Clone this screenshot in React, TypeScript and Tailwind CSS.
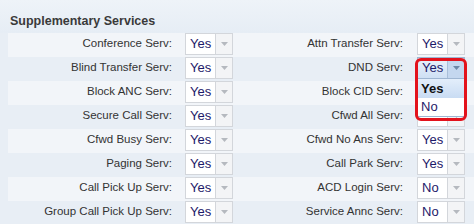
import React from 'react';

type Row = { left: string; leftVal: string; right: string; rightVal: string };

const rows: Row[] = [
  { left: 'Conference Serv:', leftVal: 'Yes', right: 'Attn Transfer Serv:', rightVal: 'Yes' },
  { left: 'Blind Transfer Serv:', leftVal: 'Yes', right: 'DND Serv:', rightVal: 'Yes' },
  { left: 'Block ANC Serv:', leftVal: 'Yes', right: 'Block CID Serv:', rightVal: '' },
  { left: 'Secure Call Serv:', leftVal: 'Yes', right: 'Cfwd All Serv:', rightVal: '' },
  { left: 'Cfwd Busy Serv:', leftVal: 'Yes', right: 'Cfwd No Ans Serv:', rightVal: 'Yes' },
  { left: 'Paging Serv:', leftVal: 'Yes', right: 'Call Park Serv:', rightVal: 'Yes' },
  { left: 'Call Pick Up Serv:', leftVal: 'Yes', right: 'ACD Login Serv:', rightVal: 'No' },
  { left: 'Group Call Pick Up Serv:', leftVal: 'Yes', right: 'Service Annc Serv:', rightVal: 'No' },
];

function Arrow({ dark }: { dark?: boolean }) {
  return (
    <svg width="7" height="4" viewBox="0 0 7 4">
      <path d="M0 0 L7 0 L3.5 4 Z" fill={dark ? '#6d88a8' : '#b5b9bf'} />
    </svg>
  );
}

function Select({ value, focused }: { value: string; focused?: boolean }) {
  return (
    <div
      className={
        'flex h-[22px] w-[48px] border ' +
        (focused ? 'border-[#9fb6d2] bg-gradient-to-b from-[#e9f1fb] to-[#cfe0f4]' : 'border-[#d3d6db] bg-white')
      }
    >
      <div className="flex flex-1 items-center pl-[4px] text-[13px] text-[#1e1a6a]">{value}</div>
      <div
        className={
          'flex w-[17px] items-center justify-center border-l ' +
          (focused ? 'border-[#a9bfd9] bg-[#c4d7ef]' : 'border-[#d3d6db] bg-[#f3f4f6]')
        }
      >
        <Arrow dark={focused} />
      </div>
    </div>
  );
}

export default function App() {
  return (
    <div
      className="h-[224px] w-[474px] overflow-hidden bg-[#e8eef5] text-[#333]"
      style={{ fontFamily: '"Liberation Sans", Arial, sans-serif' }}
    >
      <div className="h-[33px] bg-gradient-to-b from-[#eef3f8] to-[#e6edf5] pl-[10px] pt-[14px] text-[12.5px] font-bold leading-[15px] text-[#3a3a3a]">
        Supplementary Services
      </div>
      <div className="pl-[8px]">
        {rows.map((r, i) => (
          <div
            key={r.left}
            className={'flex h-[24px] items-start ' + (i % 2 === 0 ? 'bg-[#f2f5f9]' : 'bg-[#e8eef5]')}
          >
            <div className="flex h-[22px] w-[164px] items-center justify-end text-[11.5px]">{r.left}</div>
            <div className="ml-[13px]">
              <Select value={r.leftVal} />
            </div>
            <div className="flex h-[22px] w-[170px] items-center justify-end text-[11.5px]">{r.right}</div>
            <div className="relative ml-[14px]">
              {i === 1 ? (
                <>
                  <Select value={r.rightVal} focused />
                  <div className="absolute left-0 top-[22px] z-10 w-[48px] border border-t-0 border-[#9fb6d2] bg-white text-[13px] text-[#1e1a6a]">
                    <div className="flex h-[19px] items-center bg-gradient-to-b from-[#e3eefb] to-[#c9dcf3] pl-[3px] font-bold text-[#111]">
                      Yes
                    </div>
                    <div className="flex h-[18px] items-center pl-[3px]">No</div>
                  </div>
                  <div className="pointer-events-none absolute left-[-2px] top-[1px] z-20 h-[63px] w-[52px] rounded-[6px] border-[3px] border-[#e3121c]" />
                </>
              ) : (
                <Select value={r.rightVal} />
              )}
            </div>
          </div>
        ))}
      </div>
    </div>
  );
}
